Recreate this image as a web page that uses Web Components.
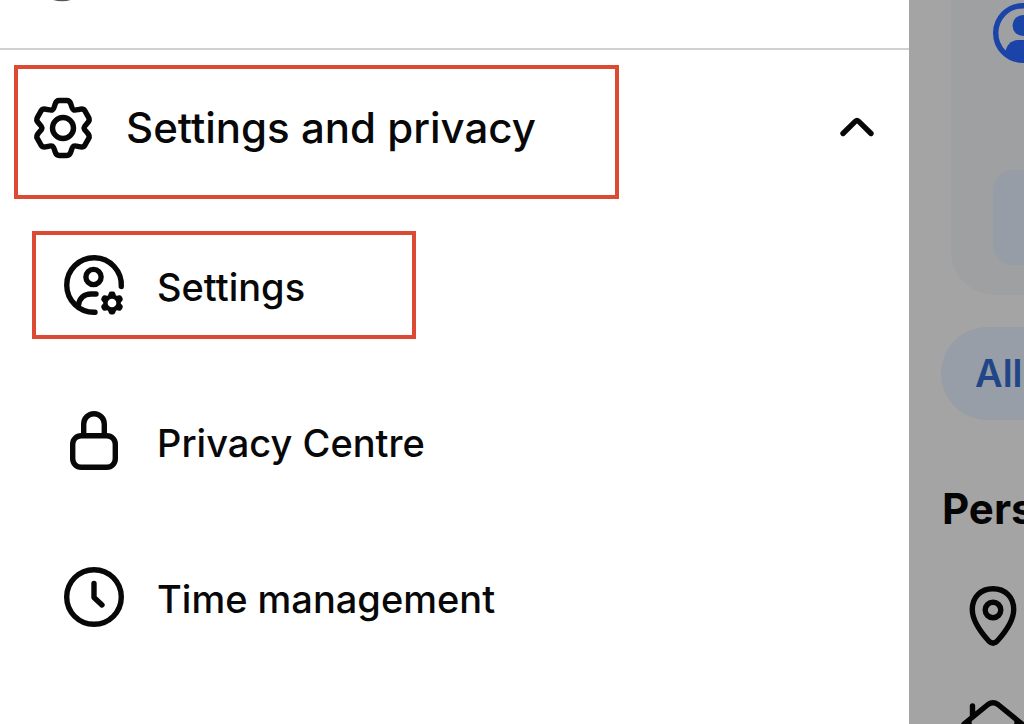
<!DOCTYPE html>
<html lang="en">
<head>
<meta charset="utf-8">
<meta name="viewport" content="width=device-width, initial-scale=1">
<title>Settings and privacy</title>
<style>
  body { margin: 0; font-family: Inter, "Liberation Sans", sans-serif; color: #080809; background: #fff; }
</style>
</head>
<body>
<app-shell>
  <nav-drawer slot="drawer">
    <nav-section label="Settings and privacy" icon="gear">
      <nav-item icon="account" marked>Settings</nav-item>
      <nav-item icon="lock">Privacy Centre</nav-item>
      <nav-item icon="clock">Time management</nav-item>
    </nav-section>
  </nav-drawer>
  <profile-panel slot="page"></profile-panel>
</app-shell>
<script>
  // Closed outline of a six-toothed gear around the origin.
  function gearPath() {
    let d = '';
    for (let k = 0; k < 6; k++) {
      const a = k * Math.PI / 3, c = Math.cos(a), s = Math.sin(a);
      const p = (x, y) => (x * c - y * s).toFixed(2) + ' ' + (x * s + y * c).toFixed(2);
      d += (k ? 'L' : 'M') + p(-10.5, -18.2) +
        'C' + p(-9, -19.2) + ' ' + p(-8.8, -21) + ' ' + p(-8, -23.5) +
        'Q' + p(-6.8, -27.5) + ' ' + p(-3.8, -27.5) +
        'L' + p(3.8, -27.5) +
        'Q' + p(6.8, -27.5) + ' ' + p(8, -23.5) +
        'C' + p(8.8, -21) + ' ' + p(9, -19.2) + ' ' + p(10.5, -18.2);
    }
    return d + 'Z';
  }
  const TEETH = [0, 60, 120, 180, 240, 300]
    .map(a => `<path d="M-1 -9.300H1L1.500 -8H-1.500Z" transform="rotate(${a})"/>`).join('');
  const ICONS = {
    gear: `<g transform="translate(30 30)"><path d="${gearPath()}"/><circle r="10.5"/></g>`,
    account: `<path d="M57.3 31.5A27.3 27.3 0 1 0 31 57.3"/><circle cx="29.5" cy="22" r="7.6"/>
      <path d="M32 39H27C20 39 15.500 43 14.500 50"/>
      <g transform="translate(48 48)"><circle r="6.600" stroke-width="4.500"/><g stroke-width="4.500">${TEETH}</g></g>`,
    lock: `<rect x="8.7" y="24.7" width="42.600" height="31.600" rx="8.5"/><path d="M19.700 24V13a10.300 10.300 0 0 1 20.600 0V24"/>`,
    clock: `<circle cx="30" cy="30" r="27.3"/><path d="M30 16.500V30.500L38 38"/>`,
    chevron: `<path d="M16 37.500L28.300 25.400Q30 23.800 31.700 25.400L44 37.500"/>`,
    help: `<circle cx="30" cy="30" r="27.5"/>`,
    person: `<circle cx="30" cy="30" r="27.3"/><g fill="currentColor" stroke="none"><circle cx="30" cy="22.500" r="10.500"/>
      <path d="M12 51C13 42 18 37 26 37H34C42 37 47 42 48 51C37 60 23 60 12 51Z"/></g>`,
    pin: `<path d="M30 2.700C42 2.700 50.700 11 50.700 23.500C50.700 34.500 42 46.500 34 55.300Q30 59 26 55.300C18 46.500 9.300 34.500 9.300 23.500C9.300 11 18 2.700 30 2.700Z"/><circle cx="30" cy="24" r="7.8"/>`,
    home: `<path d="M1 24L25 4.500Q30 1 35 4.500L59 24M9.500 17V6M6 21V57H54V21"/>`
  };

  function define(name, template, setup) {
    const t = document.createElement('template');
    t.innerHTML = template;
    customElements.define(name, class extends HTMLElement {
      connectedCallback() {
        if (this.shadowRoot) return;
        const root = this.attachShadow({ mode: 'open' });
        const content = t.content.cloneNode(true);
        if (setup) setup(this, content);
        root.append(content);
      }
    });
  }

  define('ui-icon', `<style>
      :host { display: block; flex: none; width: 60px; height: 60px; }
      svg { display: block; width: 100%; height: 100%; overflow: visible; }
    </style>
    <svg viewBox="0 0 60 60" fill="none" stroke="currentColor" stroke-width="5.4" stroke-linecap="round" stroke-linejoin="round" aria-hidden="true"></svg>`,
    (el, root) => { root.querySelector('svg').innerHTML = ICONS[el.getAttribute('name')]; });

  define('app-shell', `<style>
      :host { display: grid; grid-template-columns: minmax(0, 1fr) 115px; height: 100vh; overflow: hidden; }
    </style>
    <slot name="drawer"></slot><slot name="page"></slot>`);

  define('nav-drawer', `<style>
      :host { display: block; background: #fff; overflow: hidden; }
      .previous { display: flex; align-items: flex-end; height: 48px; padding-left: 32px; border-bottom: 2px solid #cfd0d2; overflow: hidden; }
      .previous ui-icon { margin-bottom: 47px; color: #555; }
    </style>
    <div class="previous"><ui-icon name="help"></ui-icon></div>
    <slot></slot>`);

  define('nav-section', `<style>
      :host { display: block; padding: 15px 22px 0 14px; }
      button { display: flex; align-items: center; justify-content: space-between; width: 100%; padding: 0; border: 0; background: none; color: inherit; font: 500 42px/60px Inter, "Liberation Sans", sans-serif; text-align: left; }
      .title { display: flex; flex: 0 1 605px; gap: 33px; box-sizing: border-box; padding: 29px 15px 37px; border: 4px solid #dc4a33; white-space: nowrap; }
      .chevron { margin-bottom: 12px; }
      .items { display: grid; gap: 48px; padding: 32px 0 0 18px; }
    </style>
    <button type="button" aria-expanded="true">
      <span class="title"><ui-icon></ui-icon><span class="label"></span></span>
      <ui-icon class="chevron" name="chevron"></ui-icon>
    </button>
    <div class="items"><slot></slot></div>`,
    (el, root) => {
      root.querySelector('.title ui-icon').setAttribute('name', el.getAttribute('icon'));
      root.querySelector('.label').textContent = el.getAttribute('label');
    });

  define('nav-item', `<style>
      :host { display: block; }
      a { display: flex; align-items: center; gap: 33px; box-sizing: border-box; max-width: 384px; height: 108px; padding-left: 28px; border: 4px solid transparent; color: inherit; text-decoration: none; font-size: 38px; font-weight: 500; line-height: 60px; white-space: nowrap; }
      :host([marked]) a { border-color: #dc4a33; }
      span { padding-top: 3px; }
    </style>
    <a href="#"><ui-icon></ui-icon><span><slot></slot></span></a>`,
    (el, root) => { root.querySelector('ui-icon').setAttribute('name', el.getAttribute('icon')); });

  define('profile-panel', `<style>
      :host { display: block; background: #a4a4a4; color: #050506; overflow: hidden; white-space: nowrap; }
      .card { display: grid; box-sizing: border-box; width: 400px; height: 295px; margin-left: 42px; padding: 3px 42px 30px; align-content: space-between; border-radius: 0 0 44px 44px; background: #9fa0a2; }
      .card ui-icon { color: #1a44a8; }
      .action { height: 95px; border: 0; border-radius: 20px; background: #979da6; }
      .tab { display: block; width: 200px; height: 93px; margin: 32px 0 0 32px; padding: 0 0 0 34px; border: 0; border-radius: 47px; background: #989ea7; color: #214688; font: 600 38px/93px Inter, "Liberation Sans", sans-serif; text-align: left; }
      h2 { margin: 59px 0 0 33px; font-size: 42px; line-height: 60px; font-weight: 700; }
      .details { display: grid; gap: 54px; margin: 47px 0 0 54px; }
    </style>
    <section class="card"><ui-icon name="person"></ui-icon><button class="action" type="button" aria-label="Open"></button></section>
    <button class="tab" type="button">All</button>
    <h2>Pers</h2>
    <div class="details"><ui-icon name="pin"></ui-icon><ui-icon name="home"></ui-icon></div>`);
</script>
</body>
</html>
